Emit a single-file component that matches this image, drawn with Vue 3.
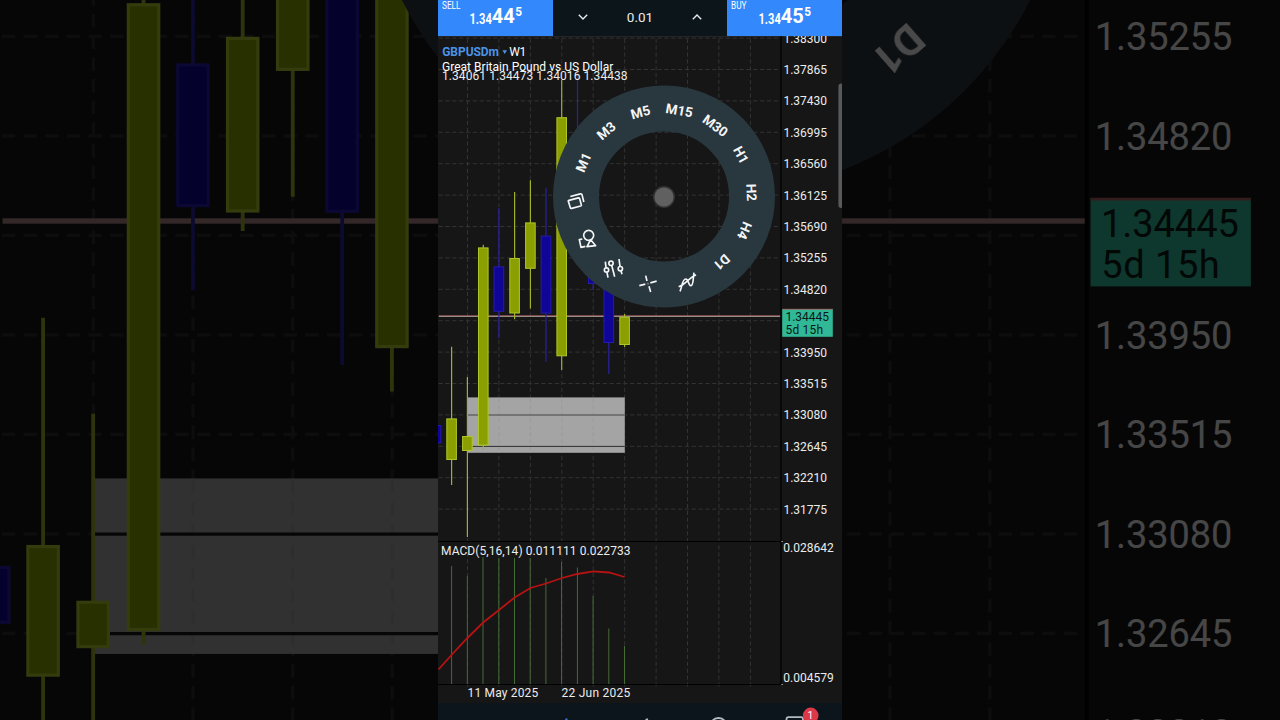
<template>
  <div class="stage">
    <div class="phone">
      <header class="trade-bar">
        <div v-for="quote in quotes" :key="quote.side" class="quote" :class="quote.side.toLowerCase()">
          <svg width="115" height="36" viewBox="0 0 115 36">
            <text class="side" x="4" y="9.3" :textLength="quote.sideWidth" lengthAdjust="spacingAndGlyphs">{{ quote.side }}</text>
            <text class="base" x="31.4" y="24" textLength="22.4" lengthAdjust="spacingAndGlyphs">1.34</text>
            <text class="big" x="53.8" y="22.6" textLength="23" lengthAdjust="spacingAndGlyphs">{{ quote.big }}</text>
            <text class="pip" x="77.2" y="15.7" textLength="6.8" lengthAdjust="spacingAndGlyphs">5</text>
          </svg>
        </div>
        <div class="volume">
          <svg width="10" height="6" viewBox="0 0 10 6"><path d="M.8 .8 5 4.9 9.2 .8" /></svg>
          <span>0.01</span>
          <svg width="10" height="6" viewBox="0 0 10 6"><path d="M.8 5.2 5 1.1 9.2 5.2" /></svg>
        </div>
      </header>

      <svg
        v-for="view in views"
        :key="view.name"
        :class="view.name"
        :viewBox="view.box"
        :width="view.width"
        :height="view.height"
      >
        <rect class="paper" x="0" y="36" width="404" height="667" />
        <rect class="top-line" x="0" y="35.6" width="404" height="1" />

        <!-- grid -->
        <line v-for="y in gridY" :key="'h' + y" class="grid" x1="0.6" :y1="y" x2="342" :y2="y" />
        <line v-for="x in gridX" :key="'v' + x" class="grid" :x1="x" y1="38.8" :x2="x" y2="541" />
        <line v-for="x in gridX" :key="'m' + x" class="grid" :x1="x" y1="545.5" :x2="x" y2="687" />

        <!-- zone -->
        <rect class="zone" x="29.4" y="397.4" width="157.4" height="55.4" />
        <line v-for="x in zoneX" :key="'z' + x" class="zone-tick" :x1="x" y1="398" :x2="x" y2="452" />
        <line class="zone-line soft" x1="29.4" y1="415" x2="186.8" y2="415" />
        <line class="zone-line" x1="29.4" y1="446.4" x2="186.8" y2="446.4" />

        <!-- current price -->
        <rect class="ask" x="0.8" y="315.3" width="341.6" height="0.9" />
        <rect class="bid" x="0.8" y="316.1" width="341.6" height="0.9" />

        <g v-for="c in candles" :key="'c' + c.x" :class="c.up ? 'up' : 'down'">
          <line class="wick" :x1="c.x" :y1="c.high" :x2="c.x" :y2="c.low" />
          <rect class="body" :x="c.x - 4.8" :y="c.top + 0.5" width="9.6" :height="c.bottom - c.top - 1" />
        </g>

        <path class="frame" d="M343 36V684.5M0 541.5H343M0 684.5H343" />
        <path class="notch" d="M343.4 541.5H344.8M343.4 684.5H344.8" />
        <text v-for="p in view.prices" :key="p.text" class="label" x="345.5" :y="p.y" textLength="43.5">{{ p.text }}</text>

        <rect class="tag" x="344.2" y="309" width="50.6" height="27.8" />
        <rect class="tag-top" x="344.2" y="308.8" width="50.6" height="0.9" />
        <text class="tag-text" x="347.5" y="321.1" textLength="43.5">1.34445</text>
        <text class="tag-text" x="347.6" y="334.2" textLength="37.4">5d 15h</text>

        <template v-if="view.full">
          <!-- MACD -->
          <line v-for="b in bars" :key="'b' + b.x" class="bar" :x1="b.x" :y1="b.top" :x2="b.x" y2="684" />
          <polyline class="signal" :points="signal" />
          <text class="label" x="3" y="555.3" textLength="189.5">MACD(5,16,14) 0.011111 0.022733</text>
          <text class="label" x="29.6" y="697" textLength="70.6">11 May 2025</text>
          <text class="label" x="123.6" y="697" textLength="68.6">22 Jun 2025</text>
          <text class="label" x="345.2" y="552.4" textLength="50.6">0.028642</text>
          <text class="label" x="345.2" y="682.2" textLength="50.6">0.004579</text>

          <text class="symbol" x="4.2" y="56" textLength="56.8">GBPUSDm</text>
          <path class="caret" d="M64.4 50.2H69L66.7 54Z" />
          <text class="title" x="71.3" y="56" textLength="17">W1</text>
          <text class="title" x="4" y="70.6" textLength="171.4">Great Britain Pound vs US Dollar</text>
          <text class="label" x="4" y="80.2" textLength="185.6">1.34061 1.34473 1.34016 1.34438</text>
        </template>

        <!-- radial menu -->
        <circle class="ring" cx="226" cy="196.5" r="88" />
        <text
          v-for="t in view.timeframes"
          :key="t.name"
          class="frame-name"
          x="226"
          y="113.8"
          :transform="`rotate(${t.angle} 226 196.5)`"
        >{{ t.name }}</text>

        <template v-if="view.full">
          <g class="icons" transform="translate(-2 80) scale(.33333)">
            <path d="M399 361 427 353.500Q430 353 431 356L436 374Q437 377 434 378L407 385Q404 386 403 383L397 364Q396 362 399 361Z" />
            <path d="M403 349.500 433 341.500Q437 340.500 438 344L443.500 366" />
          </g>
          <g class="icons" transform="translate(107 195) scale(.33333)">
            <circle cx="131" cy="121" r="15" />
            <path d="M112 132 103 134 108 157 121 154M137 134 126 155 152 152Z" />
            <path d="M181 200 183 218M186 232 189 248M200 211 209 245M222 192 225 214M228 228 231 238" />
            <circle cx="184.500" cy="225" r="6.500" />
            <circle cx="198" cy="205" r="6.500" />
            <circle cx="226" cy="221" r="6.500" />
            <path d="M283 272 301 267.500M316 263.500 335 258.500M302 242 306 258M312 274 317 291M308 266H310" />
            <path d="M405 289C411 276 412 252 422 252C432 252 429 273 438 272C446 271 444 248 447 233M401 275 414 269M414 269 440 247M440 247 453 239" />
          </g>
          <circle class="touch-halo" cx="226" cy="197" r="11" />
          <circle class="touch" cx="226" cy="197" r="9.600" />
          <rect class="scroll" x="400.400" y="83.500" width="8" height="124.500" rx="3" />
        </template>
      </svg>

      <nav class="tabs">
        <svg width="404" height="17" viewBox="0 0 404 17">
          <path class="tab-active" d="M128.400 15.500V17" />
          <path class="tab" d="M207.500 16.800 210 16.200" />
          <circle class="tab" cx="280.500" cy="23.600" r="8.600" />
          <rect class="tab" x="348.500" y="14.200" width="16.500" height="14" rx="2" />
          <circle class="badge" cx="372.700" cy="12.400" r="7.800" />
          <text class="badge-text" x="372.500" y="16">1</text>
        </svg>
      </nav>
    </div>
  </div>
</template>

<script setup>
const quotes = [
  { side: 'SELL', sideWidth: 18.5, big: '44' },
  { side: 'BUY', sideWidth: 15.5, big: '45' },
]

const gridX = Array.from({ length: 10 }, (_, i) => +(29.5 + i * 31.43).toFixed(1))
const gridY = Array.from({ length: 16 }, (_, i) => +(38.1 + i * 31.4).toFixed(1))
const zoneX = gridX.slice(1, 5)

const prices = gridY
  .map((y, i) => ({ y: y + 4.4, text: (1.383 - i * 0.00435).toFixed(5) }))
  .filter((p) => p.text !== '1.34385')

const timeframes = ['M1', 'M3', 'M5', 'M15', 'M30', 'H1', 'H2', 'H4', 'D1'].map((name, i) => ({
  name,
  angle: +(-67 + (i * 360) / 14).toFixed(1),
}))

// the backdrop is the middle band of the same chart, enlarged
const views = [
  {
    name: 'backdrop',
    box: '0 246.4 404 227.25',
    width: 1280,
    height: 720,
    full: false,
    prices: prices.filter((p) => p.y > 250 && p.y < 490),
    timeframes: timeframes.slice(-1),
  },
  { name: 'chart', box: '0 36 404 667', width: 404, height: 667, full: true, prices, timeframes },
]

// x, high, top, bottom, low, up
const candles = [
  [-2, 425, 425, 443.3, 443, 0],
  [13.6, 346.7, 418.4, 460, 485, 1],
  [29.4, 377, 436, 451, 537, 1],
  [45.3, 244.7, 247.4, 445.6, 450, 1],
  [60.9, 208, 266.4, 311.8, 338, 0],
  [76.6, 192, 258, 313.5, 319.3, 1],
  [92.4, 180.3, 222.4, 268.8, 308.5, 1],
  [108, 188, 235.6, 313.6, 361.6, 0],
  [123.7, 80, 117.2, 356.3, 370, 1],
  [139.5, 72, 150, 240, 255, 0],
  [155.2, 200, 220, 284, 290, 0],
  [170.8, 250, 262, 343, 374, 0],
  [186.6, 314, 316.8, 345, 347, 1],
].map(([x, high, top, bottom, low, up]) => ({ x, high, top, bottom, low, up }))

const bars = [566, 576, 557, 558, 558, 558, 578, 562, 567.5, 596, 628.5, 646].map((top, i) => ({
  x: +(13.6 + i * 15.72).toFixed(1),
  top,
}))

const signal =
  '0.5,669.5 13.5,655 29.4,638 45.2,622.5 61,610 76.6,597.5 92.4,588 108,583.5 124,578 139.5,574 155.2,571.3 171,572.5 186.6,577'
</script>

<style>
body {
  margin: 0;
  background: #000;
}
</style>

<style scoped>
.stage {
  position: relative;
  width: 1280px;
  height: 720px;
  overflow: hidden;
  background: #000;
  font-family: Roboto, "Liberation Sans", sans-serif;
}
.phone {
  display: flex;
  flex-direction: column;
  width: 404px;
  height: 720px;
  margin-left: 438px;
}
svg {
  display: block;
}
.backdrop {
  position: absolute;
  left: 0;
  top: 0;
  opacity: 0.3;
}
.trade-bar,
.chart,
.tabs {
  position: relative;
  z-index: 1;
}
.trade-bar {
  display: flex;
  height: 36px;
  background: #0c151a;
}
.quote {
  width: 115px;
  background: #3388fc;
}
.quote.buy {
  order: 2;
}
.quote text {
  fill: #fff;
}
.side {
  font-size: 10px;
}
.base {
  font-size: 14px;
  font-weight: 700;
}
.big {
  font-size: 19.5px;
  font-weight: 700;
}
.pip {
  font-size: 13px;
  font-weight: 700;
}
.volume {
  flex: 1;
  order: 1;
  display: flex;
  align-items: center;
  justify-content: space-between;
  padding: 0 25px 2px;
  color: #e8ecee;
  font-size: 13.5px;
}
.volume path {
  fill: none;
  stroke: #e8ecee;
  stroke-width: 1.4;
}
.chart {
  flex: none;
}
.paper {
  fill: #161616;
}
.top-line {
  fill: #2c3236;
}
.grid {
  stroke: #333;
  stroke-width: 1;
  stroke-dasharray: 4.2 2.64;
}
.backdrop .grid {
  stroke: #2e2e2e;
}
.zone {
  fill: #a4a4a4;
}
.zone-tick {
  stroke: #9b9b9b;
  stroke-dasharray: 4.2 2.64;
}
.zone-line {
  stroke: #2e2e2e;
  stroke-width: 1;
}
.zone-line.soft {
  stroke: #444;
}
.backdrop .zone-line {
  stroke: #161616;
}
.ask {
  fill: #a55f60;
}
.bid {
  fill: #a39a90;
}
.backdrop .ask,
.backdrop .bid {
  fill: #ac8486;
}
.wick {
  stroke-width: 1.2;
}
.up .wick {
  stroke: #a0b02a;
}
.up .body {
  fill: #8ba000;
  stroke: #aec62a;
}
.down .wick {
  stroke: #2a22a0;
}
.down .body {
  fill: #0f0596;
  stroke: #251cac;
}
.bar {
  stroke: #446c36;
  stroke-width: 1;
}
.signal {
  fill: none;
  stroke: #b81212;
  stroke-width: 1.8;
}
.frame {
  fill: none;
  stroke: #000;
  stroke-width: 1.2;
}
.notch {
  stroke: #aaa;
}
.label,
.title,
.tag-text {
  font-size: 12px;
  fill: #ececec;
}
.title {
  fill: #fff;
}
.symbol {
  font-size: 12px;
  font-weight: 700;
  fill: #4a94e6;
}
.caret {
  fill: #4a94e6;
}
.tag {
  fill: #31b896;
}
.tag-top {
  fill: #a85f5c;
}
.tag-text {
  fill: #0a1a16;
}
.ring {
  fill: none;
  stroke: #29373f;
  stroke-width: 46;
}
.frame-name {
  font-size: 13.5px;
  font-weight: 700;
  fill: #f4f6f7;
  text-anchor: middle;
}
.icons {
  fill: none;
  stroke: #f4f6f7;
  stroke-width: 5;
  stroke-linejoin: round;
}
.touch-halo {
  fill: #333;
}
.touch {
  fill: #606060;
}
.scroll {
  fill: #58595a;
}
.tabs {
  height: 17px;
  background: #0b151b;
}
.tab {
  fill: none;
  stroke: #b4bbc0;
  stroke-width: 1.8;
}
.tab-active {
  stroke: #3f83e8;
  stroke-width: 2;
}
.badge {
  fill: #dc3848;
}
.badge-text {
  font-size: 10.5px;
  fill: #fff;
  text-anchor: middle;
}
</style>
